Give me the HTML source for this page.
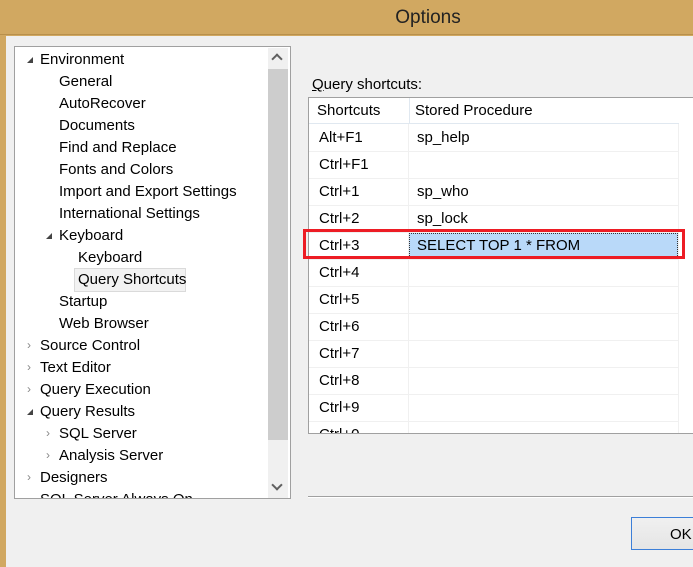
<!DOCTYPE html>
<html><head><meta charset="utf-8"><style>
*{margin:0;padding:0;box-sizing:border-box}
body{width:693px;height:567px;overflow:hidden;background:#d1a861;font-family:"Liberation Sans",sans-serif;position:relative;color:#000}
.title{position:absolute;left:0;top:0;width:693px;height:35px;border-bottom:1px solid #b8904c;text-align:center;font-size:19px;line-height:35px;color:#222;padding-left:163px}
.client{position:absolute;left:6px;top:36px;width:687px;height:531px;background:#f0f0f0}
.tree{position:absolute;left:14px;top:46px;width:277px;height:453px;border:1px solid #a0a0a0;background:#fff;overflow:hidden}
.row{position:absolute;height:22px;line-height:22px;font-size:15px;white-space:nowrap}
.exp{position:absolute;width:0;height:0;border-left:6px solid transparent;border-bottom:6px solid #444;}
.col{position:absolute;font-size:12px;color:#888}
.sb{position:absolute;left:253px;top:1px;width:20px;height:450px;background:#f0f0f0}
.thumb{position:absolute;left:0;top:21px;width:20px;height:371px;background:#cdcdcd}
.lbl{position:absolute;left:312px;top:76px;font-size:15px}
.grid{position:absolute;left:308px;top:97px;width:385px;height:337px;border:1px solid #a0a0a0;border-right:none;background:#fff;overflow:hidden}
.hdr{position:absolute;left:0;top:0;width:370px;height:26px;border-bottom:1px solid #e0e8f0;font-size:15px;line-height:26px}
.cell{position:absolute;font-size:15px;line-height:27px;height:27px}
.hl{position:absolute;left:0;width:370px;height:1px;background:#f0f0f0}
</style></head><body>
<div class="title">Options</div>
<div class="client"></div>
<div class="tree">
<div class="sb"><div style="position:absolute;left:5px;top:7px;width:8px;height:8px;border-left:2px solid #606060;border-top:2px solid #606060;transform:rotate(45deg)"></div><div class="thumb"></div><div style="position:absolute;left:5px;top:433px;width:8px;height:8px;border-right:2px solid #606060;border-bottom:2px solid #606060;transform:rotate(45deg)"></div></div>
<div class="exp" style="left:12px;top:10px"></div><div class="row" style="left:25px;top:2px">Environment</div>
<div class="row" style="left:44px;top:24px">General</div>
<div class="row" style="left:44px;top:46px">AutoRecover</div>
<div class="row" style="left:44px;top:68px">Documents</div>
<div class="row" style="left:44px;top:90px">Find and Replace</div>
<div class="row" style="left:44px;top:112px">Fonts and Colors</div>
<div class="row" style="left:44px;top:134px">Import and Export Settings</div>
<div class="row" style="left:44px;top:156px">International Settings</div>
<div class="exp" style="left:31px;top:186px"></div><div class="row" style="left:44px;top:178px">Keyboard</div>
<div class="row" style="left:63px;top:200px">Keyboard</div>
<div style="position:absolute;left:59px;top:221px;width:112px;height:24px;background:#f2f2f2;border:1px solid #dadada"></div>
<div class="row" style="left:63px;top:222px">Query Shortcuts</div>
<div class="row" style="left:44px;top:244px">Startup</div>
<div class="row" style="left:44px;top:266px">Web Browser</div>
<div class="col" style="left:12px;top:291px">›</div><div class="row" style="left:25px;top:288px">Source Control</div>
<div class="col" style="left:12px;top:313px">›</div><div class="row" style="left:25px;top:310px">Text Editor</div>
<div class="col" style="left:12px;top:335px">›</div><div class="row" style="left:25px;top:332px">Query Execution</div>
<div class="exp" style="left:12px;top:362px"></div><div class="row" style="left:25px;top:354px">Query Results</div>
<div class="col" style="left:31px;top:379px">›</div><div class="row" style="left:44px;top:376px">SQL Server</div>
<div class="col" style="left:31px;top:401px">›</div><div class="row" style="left:44px;top:398px">Analysis Server</div>
<div class="col" style="left:12px;top:423px">›</div><div class="row" style="left:25px;top:420px">Designers</div>
<div class="row" style="left:25px;top:442px">SQL Server Always On</div>
</div>
<div class="lbl"><u>Q</u>uery shortcuts:</div>
<div class="grid">
<div class="hdr"><span style="position:absolute;left:8px">Shortcuts</span><span style="position:absolute;left:100px;top:0;width:1px;height:26px;background:#e0e8f0"></span><span style="position:absolute;left:106px">Stored Procedure</span></div>
<div style="position:absolute;left:99px;top:26px;width:1px;height:310px;background:#f0f0f0"></div>
<div style="position:absolute;left:369px;top:26px;width:1px;height:310px;background:#f0f0f0"></div>
<div class="hl" style="top:53px"></div><div class="hl" style="top:80px"></div><div class="hl" style="top:107px"></div><div class="hl" style="top:134px"></div><div class="hl" style="top:161px"></div><div class="hl" style="top:188px"></div><div class="hl" style="top:215px"></div><div class="hl" style="top:242px"></div><div class="hl" style="top:269px"></div><div class="hl" style="top:296px"></div><div class="hl" style="top:323px"></div>
<div class="cell" style="left:10px;top:26px">Alt+F1</div><div class="cell" style="left:108px;top:26px">sp_help</div>
<div class="cell" style="left:10px;top:53px">Ctrl+F1</div>
<div class="cell" style="left:10px;top:80px">Ctrl+1</div><div class="cell" style="left:108px;top:80px">sp_who</div>
<div class="cell" style="left:10px;top:107px">Ctrl+2</div><div class="cell" style="left:108px;top:107px">sp_lock</div>
<div style="position:absolute;left:100px;top:135px;width:269px;height:25px;background:#b9d9f9;border:1px dotted #333"></div>
<div class="cell" style="left:10px;top:134px">Ctrl+3</div><div class="cell" style="left:108px;top:134px">SELECT TOP 1 * FROM</div>
<div class="cell" style="left:10px;top:161px">Ctrl+4</div>
<div class="cell" style="left:10px;top:188px">Ctrl+5</div>
<div class="cell" style="left:10px;top:215px">Ctrl+6</div>
<div class="cell" style="left:10px;top:242px">Ctrl+7</div>
<div class="cell" style="left:10px;top:269px">Ctrl+8</div>
<div class="cell" style="left:10px;top:296px">Ctrl+9</div>
<div class="cell" style="left:10px;top:323px">Ctrl+0</div>
</div>
<div style="position:absolute;left:303px;top:229px;width:382px;height:30px;border:3px solid #ed1c24"></div>
<div style="position:absolute;left:308px;top:496px;width:385px;height:1px;background:#a0a0a0"></div>
<div style="position:absolute;left:308px;top:497px;width:385px;height:1px;background:#fff"></div>
<div style="position:absolute;left:631px;top:517px;width:70px;height:33px;border:1px solid #3c7fd8;background:linear-gradient(#f0f0f0,#e5e5e5);font-size:15px;line-height:33px;padding-left:38px">OK</div>
</body></html>
